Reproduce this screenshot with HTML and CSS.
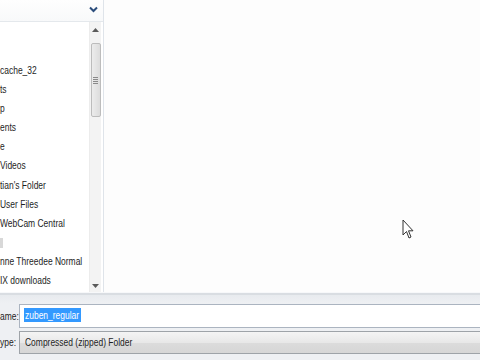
FILE: index.html
```html
<!DOCTYPE html>
<html>
<head>
<meta charset="utf-8">
<link rel="stylesheet" href="styles.css">
</head>
<body>
<div class="screen">
  <div class="main">
    <div class="nav">
      <div class="nav-head">
        <svg class="chev" width="9" height="7" viewBox="0 0 9 7"><path d="M1 1.5 L4.5 5 L8 1.5" fill="none" stroke="#2b4d7c" stroke-width="2"/></svg>
      </div>
      <div class="nav-body">
        <ul class="list">
          <li><span class="sq">cache_32</span></li>
          <li><span class="sq">ts</span></li>
          <li><span class="sq">p</span></li>
          <li><span class="sq">ents</span></li>
          <li><span class="sq">e</span></li>
          <li><span class="sq">Videos</span></li>
          <li><span class="sq">tian's Folder</span></li>
          <li><span class="sq">User Files</span></li>
          <li><span class="sq">WebCam Central</span></li>
          <li><span class="stub"></span></li>
          <li><span class="sq">nne Threedee Normal</span></li>
          <li><span class="sq">IX downloads</span></li>
        </ul>
        <div class="scroll">
          <svg class="arrow" width="7" height="4" viewBox="0 0 7 4"><path d="M0 4 L3.5 0 L7 4Z" fill="#5a5a5a"/></svg>
          <div class="thumb"><div class="grip"></div></div>
          <div class="track"></div>
          <svg class="arrow" width="7" height="4" viewBox="0 0 7 4"><path d="M0 0 L3.5 4 L7 0Z" fill="#5a5a5a"/></svg>
        </div>
      </div>
    </div>
    <div class="content">
      <svg class="cursor" width="12" height="21" viewBox="0 0 12 21"><path d="M1 1 L1 16 L4.5 12.5 L7 19 L9 18 L6.5 11.8 L11 11.8 Z" fill="#fff" stroke="#333" stroke-width="1" stroke-linejoin="round"/></svg>
    </div>
  </div>
  <div class="bottom">
    <div class="field-row">
      <span class="label"><span class="sq">ame:</span></span>
      <div class="input"><span class="sel"><span class="sq">zuben_regular</span></span></div>
    </div>
    <div class="field-row">
      <span class="label"><span class="sq">ype:</span></span>
      <div class="select"><span class="sq">Compressed (zipped) Folder</span></div>
    </div>
  </div>
</div>
</body>
</html>
```
FILE: styles.css
```css
html, body {
  margin: 0;
  padding: 0;
  background: #fff;
}
.screen {
  width: 480px;
  height: 360px;
  overflow: hidden;
  display: flex;
  flex-direction: column;
  font-family: "Liberation Sans", Arial, sans-serif;
  font-size: 11px;
  color: #1e1e1e;
}
.sq {
  display: inline-block;
  transform: scaleX(0.77);
  transform-origin: 0 50%;
  white-space: nowrap;
}
.main {
  display: flex;
  height: 292px;
}
.nav {
  width: 103px;
  border-right: 1px solid #dfe4ea;
  display: flex;
  flex-direction: column;
  background: #fff;
}
.nav-head {
  height: 22px;
  border-bottom: 1px solid #e4e8ec;
  display: flex;
  justify-content: flex-end;
  align-items: flex-start;
  padding-right: 5px;
  box-sizing: border-box;
  background: linear-gradient(#fefefe, #f8f9fa);
}
.chev {
  margin-top: 6px;
}
.nav-body {
  flex: 1;
  display: flex;
  padding-right: 2px;
}
.list {
  flex: 1;
  list-style: none;
  margin: 0;
  padding: 39px 0 0 0;
  overflow: hidden;
}
.list li {
  height: 19.1px;
  line-height: 19px;
  white-space: nowrap;
}
.stub {
  display: inline-block;
  width: 3px;
  height: 10px;
  background: #d8d8d8;
  vertical-align: middle;
}
.scroll {
  width: 12px;
  display: flex;
  flex-direction: column;
  align-items: center;
  padding: 6px 0 4px;
  background: #f3f3f3;
  border-left: 1px solid #ececec;
  box-sizing: border-box;
}
.arrow {
  flex: none;
}
.thumb {
  width: 10px;
  height: 74px;
  margin-top: 11px;
  box-sizing: border-box;
  border: 1px solid #bcbcbc;
  border-radius: 2px;
  background: linear-gradient(90deg, #ececec, #dcdcdc);
  display: flex;
  align-items: center;
  justify-content: center;
}
.grip {
  width: 5px;
  height: 7px;
  background: repeating-linear-gradient(#8a8a8a 0 1px, transparent 1px 2px);
}
.track {
  flex: 1;
}
.content {
  flex: 1;
  position: relative;
  background: #fdfdfd;
}
.cursor {
  position: absolute;
  left: 298px;
  top: 219px;
}
.bottom {
  flex: 1;
  background: linear-gradient(#e6e9ed, #eef0f3 10px, #eef0f3);
  border-top: 1px solid #f7f8fa;
  box-shadow: inset 0 4px 0 -2px #d9dde2;
  padding-top: 11px;
  box-sizing: border-box;
  display: flex;
  flex-direction: column;
  gap: 2px;
}
.field-row {
  display: flex;
  align-items: center;
  height: 24px;
}
.label {
  width: 19px;
  flex: none;
  overflow: hidden;
  white-space: nowrap;
}
.input {
  flex: 1;
  height: 24px;
  box-sizing: border-box;
  border: 1px solid #abb4c0;
  border-right: none;
  background: #fff;
  padding: 3px 0 0 4px;
}
.sel {
  display: inline-block;
  background: #3399ff;
  color: #fff;
  line-height: 14px;
  width: 56px;
  padding-left: 1px;
  overflow: hidden;
}
.select {
  flex: 1;
  height: 23px;
  box-sizing: border-box;
  border: 1px solid #9ea3a8;
  border-right: none;
  background: linear-gradient(#f4f4f4, #e8e8e8 50%, #dcdcdc 51%, #d6d6d6);
  padding-left: 5px;
  line-height: 21px;
}
```
